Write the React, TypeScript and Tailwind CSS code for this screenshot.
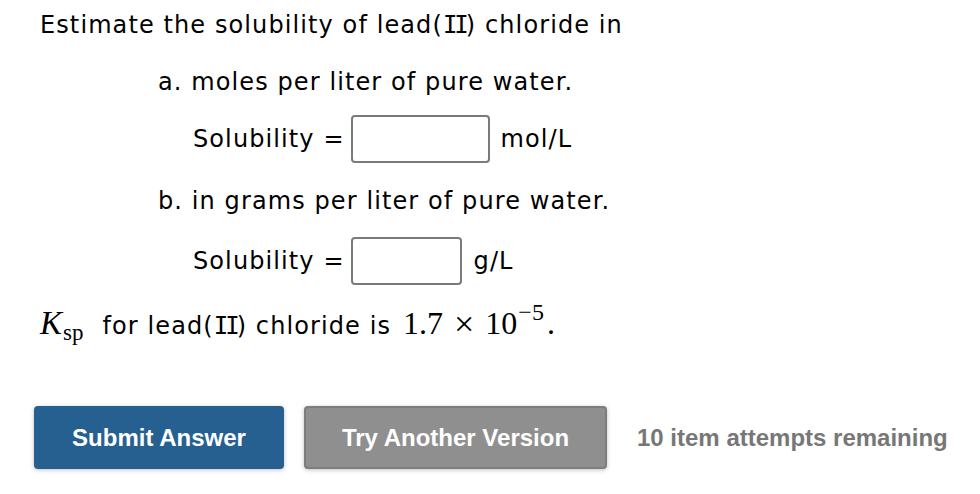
export default function App() {
  const sans = "font-['DejaVu_Sans',Verdana,sans-serif]"
  const serif = "font-['Liberation_Serif','DejaVu_Serif',serif]"
  // Verdana's capital I has bars; DejaVu Sans Mono's is the nearest installed glyph
  const roman = <span className="font-['DejaVu_Sans_Mono',monospace] tracking-[-3px]">II</span>

  return (
    <div className={`min-h-[494px] w-[980px] bg-white pl-[40px] pt-[7px] text-[24px] tracking-[1.1px] text-black ${sans}`}>
      <p className="h-9 leading-9">Estimate the solubility of lead({roman}) chloride in</p>

      <div className="pl-[118px]">
        <p className="mt-[21px] h-9 leading-9">a. moles per liter of pure water.</p>
        <div className="mt-[15px] flex h-[48px] items-center pl-[35px]">
          <span>Solubility =</span>
          <input className="ml-[6px] h-[48px] w-[139px] rounded-[4px] border-2 border-[#7a7a7a] bg-white outline-none" />
          <span className="ml-[11px]">mol/L</span>
        </div>

        <p className="mt-[20px] h-9 leading-9">b. in grams per liter of pure water.</p>
        <div className="mt-[18px] flex h-[48px] items-center pl-[35px]">
          <span>Solubility =</span>
          <input className="ml-[6px] h-[48px] w-[111px] rounded-[4px] border-2 border-[#7a7a7a] bg-white outline-none" />
          <span className="ml-[12px]">g/L</span>
        </div>
      </div>

      <p className="mt-[18px] flex h-10 items-baseline leading-10 tracking-normal">
        <span className={`${serif} text-[33px] italic`}>K</span>
        <span className={`${serif} relative top-[6px] ml-[1px] text-[23px]`}>sp</span>
        <span className="ml-[19px] tracking-[1.1px]">for lead({roman}) chloride is</span>
        <span className={`${serif} ml-[12px] text-[32px]`}>1.7</span>
        <span className={`${serif} relative top-[2px] mx-[11px] text-[36px] leading-none`}>×</span>
        <span className={`${serif} text-[32px]`}>10</span>
        <span className={`${serif} relative top-[-14px] ml-[1px] text-[24px] leading-none`}>−5</span>
        <span className={`${serif} ml-[3px] text-[32px]`}>.</span>
      </p>

      <div className="ml-[-6px] mt-[63px] flex items-center font-['Liberation_Sans',Arial,sans-serif] font-bold tracking-normal">
        <button className="h-[63px] w-[250px] rounded-[4px] bg-[#266091] text-[24px] text-white shadow-[0_1px_4px_rgba(0,0,0,0.25)]">
          Submit Answer
        </button>
        <button className="ml-[20px] h-[63px] w-[303px] rounded-[4px] border-2 border-[#7d7d7d] bg-[#8f8f8f] text-[24px] text-white shadow-[0_1px_4px_rgba(0,0,0,0.25)]">
          Try Another Version
        </button>
        <span className="ml-[30px] text-[24px] text-[#777777]">10 item attempts remaining</span>
      </div>
    </div>
  )
}
